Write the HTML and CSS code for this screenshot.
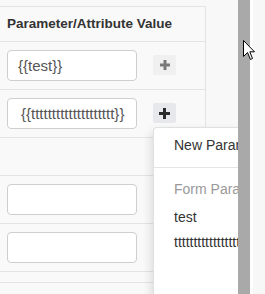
FILE: index.html
```html
<!DOCTYPE html>
<html>
<head>
<meta charset="utf-8">
<link rel="stylesheet" href="styles.css">
</head>
<body>
<div class="page">
  <div class="panel">
    <div class="row head">Parameter/Attribute Value</div>
    <div class="row">
      <div class="input">{{test}}</div>
      <span class="btn"><svg width="10" height="10" viewBox="0 0 10 10"><rect x="3.5" y="0" width="3" height="10" fill="#7a7a7a"/><rect x="0" y="3.5" width="10" height="3" fill="#7a7a7a"/></svg></span>
    </div>
    <div class="row">
      <div class="input long">{{tttttttttttttttttttt}}</div>
      <span class="btn active"><svg width="11" height="11" viewBox="0 0 11 11"><rect x="4" y="0" width="3" height="11" fill="#2b2b2b"/><rect x="0" y="4" width="11" height="3" fill="#2b2b2b"/></svg></span>
    </div>
    <div class="row empty"></div>
    <div class="row">
      <div class="input"></div>
    </div>
    <div class="row">
      <div class="input"></div>
    </div>
    <div class="row thin"></div>
  </div>
</div>
<ul class="menu">
  <li class="item first">New Parameter</li>
  <li class="divider"></li>
  <li class="header">Form Parameters</li>
  <li class="item">test</li>
  <li class="item">tttttttttttttttttttt</li>
</ul>
<div class="scroll"></div>
<div class="strip"></div>
<svg class="cursor" width="13" height="21" viewBox="0 0 13 21"><path d="M0.5 0.5 L0.5 16.5 L4.5 12.5 L7.5 19.5 L9.5 18.5 L6.8 11.8 L11.5 11.8 Z" fill="#fff" stroke="#000" stroke-width="1"/></svg>
</body>
</html>
```
FILE: styles.css
```css
html, body {
  margin: 0;
  padding: 0;
}
body {
  width: 265px;
  height: 294px;
  overflow: hidden;
  position: relative;
  background: #f8f8f8;
  font-family: "Liberation Sans", Arial, sans-serif;
  color: #333;
}
.page {
  padding-top: 6px;
}
.panel {
  width: 205px;
  border-top: 1px solid #e3e3e3;
  border-right: 1px solid #e3e3e3;
  background: #f9f9f9;
  height: 287px;
}
.row {
  display: flex;
  align-items: flex-start;
  padding-left: 7px;
  height: 47px;
  border-bottom: 1px solid #e3e3e3;
  box-sizing: content-box;
}
.row.head {
  height: 34px;
  line-height: 34px;
  font-weight: bold;
  font-size: 13.5px;
  color: #333;
}
.row.empty {
  height: 37px;
}
.row.thin {
  height: 10px;
}
.input {
  margin-top: 8px;
  width: 130px;
  height: 31px;
  box-sizing: border-box;
  border: 1px solid #cfcfcf;
  border-radius: 4px;
  background: #fff;
  font-size: 15px;
  line-height: 29px;
  padding-left: 10px;
  color: #555;
  white-space: nowrap;
  overflow: hidden;
}
.input.long {
  padding-left: 13px;
}
.btn {
  margin-top: 13px;
  margin-left: 16px;
  width: 23px;
  height: 20px;
  display: flex;
  align-items: center;
  justify-content: center;
  background: #f0f0f0;
  border-radius: 2px;
}
.btn.active {
  background: #e6e8ec;
}
.menu {
  position: absolute;
  left: 153px;
  top: 127px;
  width: 85px;
  height: 166px;
  box-sizing: content-box;
  margin: 0;
  padding: 0;
  list-style: none;
  background: #fff;
  border: 1px solid #e0e0e0;
  border-right: 0;
  border-bottom: 0;
  border-radius: 4px 0 0 0;
  box-shadow: -2px 4px 10px rgba(0, 0, 0, 0.12);
  font-size: 14px;
  white-space: nowrap;
  overflow: hidden;
}
.menu .item {
  padding: 0 0 0 20px;
  line-height: 25px;
  color: #333;
}
.menu .item.first {
  line-height: 20px;
  padding-top: 7px;
  padding-bottom: 12px;
}
.menu .divider {
  height: 1px;
  background: #e5e5e5;
  margin: 0;
}
.menu .header {
  padding: 11px 0 6px 20px;
  line-height: 20px;
  color: #9a9a9a;
}
.scroll {
  position: absolute;
  left: 238px;
  top: 0;
  width: 12px;
  height: 294px;
  background: #a9a9a9;
}
.strip {
  position: absolute;
  left: 250px;
  top: 0;
  width: 15px;
  height: 294px;
  background: #f7f7f7;
  border-left: 3px solid #fdfdfd;
  box-sizing: border-box;
}
.cursor {
  position: absolute;
  left: 243px;
  top: 40px;
}
```
